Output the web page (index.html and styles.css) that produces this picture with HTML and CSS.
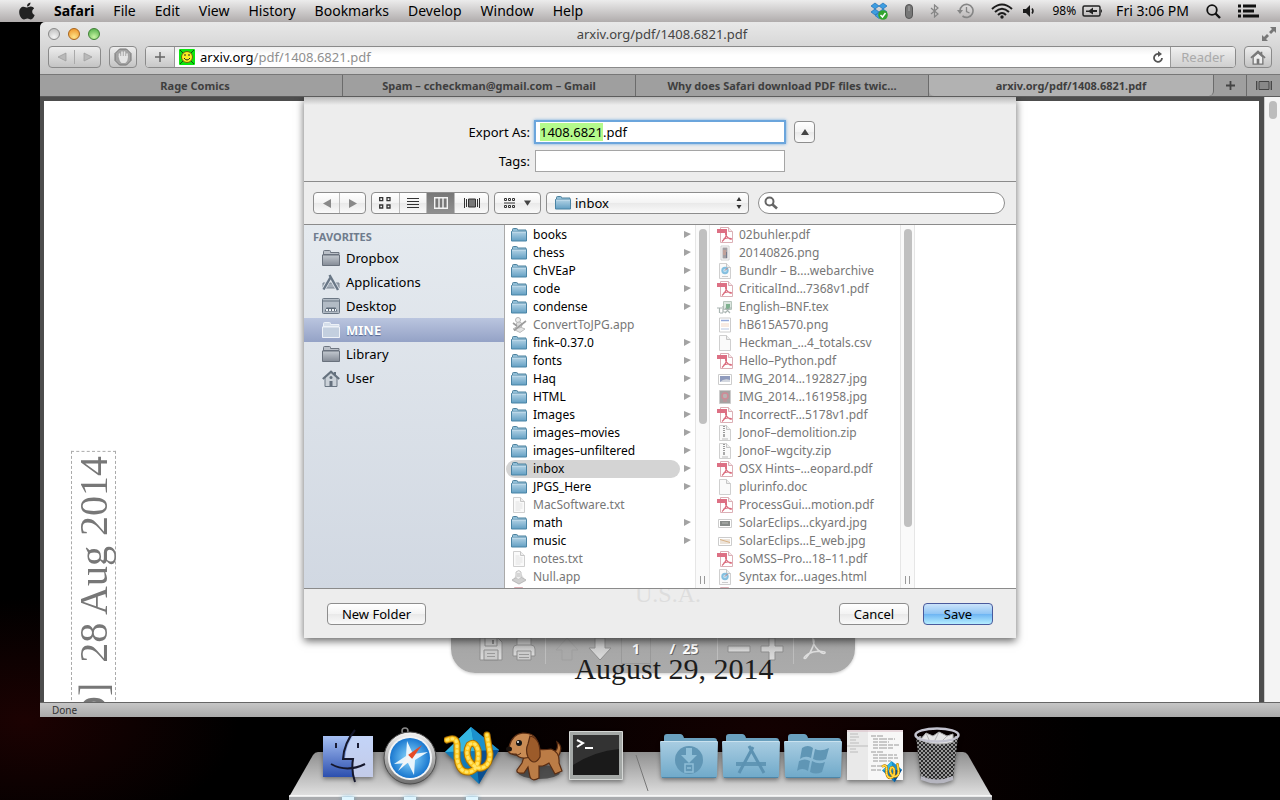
FILE: index.html
```html
<!DOCTYPE html>
<html lang="en">
<head>
<meta charset="utf-8">
<title>arxiv.org/pdf/1408.6821.pdf</title>
<link rel="stylesheet" href="styles.css">
</head>
<body>
<svg class="defs" width="0" height="0" aria-hidden="true">
  <defs>
    <linearGradient id="g-blue" x1="0" y1="0" x2="0" y2="1"><stop offset="0" stop-color="#b3d3e5"/><stop offset="1" stop-color="#629fc3"/></linearGradient>
    <linearGradient id="g-gray" x1="0" y1="0" x2="0" y2="1"><stop offset="0" stop-color="#c3c9d0"/><stop offset="1" stop-color="#848b96"/></linearGradient>
    <linearGradient id="g-big" x1="0" y1="0" x2="0" y2="1"><stop offset="0" stop-color="#a9cde2"/><stop offset="1" stop-color="#6fa9c9"/></linearGradient>
    <linearGradient id="g-metal" x1="0" y1="0" x2="0" y2="1"><stop offset="0" stop-color="#f4f4f4"/><stop offset="1" stop-color="#707070"/></linearGradient>
    <linearGradient id="g-key" x1="0" y1="0" x2="0" y2="1"><stop offset="0" stop-color="#bdbdbd"/><stop offset="1" stop-color="#dcdcdc"/></linearGradient>
    <symbol id="folder" viewBox="0 0 16 14">
      <path d="M1.500 3V1.500q0-1 1-1h3q1 0 1 1V2H15v2H1z" fill="#8fbdd6" stroke="#4c819d"/>
      <path d="M.5 3.500h15v9.500h-15z" fill="url(#g-blue)" stroke="#4a84a5"/>
      <path d="M1 4h14" stroke="#cbe2ef"/>
    </symbol>
    <symbol id="folder-gray" viewBox="0 0 18 16">
      <path d="M1.500 4V1.500q0-1 1-1h5q1 0 1 1V2.500H17v2H1z" fill="#bac0c8" stroke="#6d7580"/>
      <path d="M.5 5h17v10.500H.5z" fill="url(#g-gray)" stroke="#69717c"/>
    </symbol>
    <symbol id="folder-light" viewBox="0 0 18 16">
      <path d="M1.500 4V1.500q0-1 1-1h5q1 0 1 1V2.500H17v2H1z" fill="#d5deea" stroke="#edf1f7"/>
      <path d="M.5 5h17v10.500H.5z" fill="#c3cfdf" stroke="#eef2f8"/>
    </symbol>
    <symbol id="apps" viewBox="0 0 18 16">
      <path d="M1 8.500h16v5H1z" fill="#a3adb8" stroke="#7a8592"/>
      <path d="M1 15.500 9 2M7.500 1l8.500 14.500" stroke="#dfe5ec" stroke-width="4" fill="none"/>
      <path d="M1.500 15 9 2M7.500.5l8.500 15" stroke="#697786" stroke-width="2.400" fill="none"/>
    </symbol>
    <symbol id="desktop" viewBox="0 0 18 16">
      <rect x=".5" y=".5" width="17" height="15" rx="1" fill="#b2bbc5" stroke="#6a7683"/>
      <path d="M1 3h16" stroke="#6a7683"/><path d="M4.500 9.500h9l2 4h-13z" fill="#5e6b79"/>
      <path d="M4 12h10" stroke="#eef2f6" stroke-width="2" stroke-dasharray="2 1"/>
    </symbol>
    <symbol id="home" viewBox="0 0 18 17">
      <path d="M3 8v8.500h12V8L9 2.500z" fill="#cbd2d9" stroke="#6a7683"/>
      <path d="M.8 9 9 1.500 17.200 9M13 2v3" stroke="#65717e" stroke-width="2" fill="none"/>
      <path d="M7.500 11h3v5.500h-3z" fill="#65717e"/><circle cx="9" cy="7.500" r="1.500" fill="#65717e"/>
    </symbol>
    <symbol id="pdf" viewBox="0 0 16 16">
      <path d="M3.500.5h8l4 4v11h-12z" fill="#fff" stroke="#dbb0b6"/><path d="M11.500.5v4h4" fill="#f5e9eb" stroke="#dbb0b6"/>
      <path d="M0 2h10v4H0z" fill="#dd7084"/>
      <path d="M9 6c1.500 1-1 6-4 8.500M9 6c-1.500 1 1 5 5.500 6.500M6 12.500c2-1.500 6-2 9-.5" fill="none" stroke="#da6a7c" stroke-width="1.200"/>
    </symbol>
    <symbol id="file" viewBox="0 0 16 16">
      <path d="M2.500.5h7l4 4v11h-11z" fill="#fafafa" stroke="#cfcfcf"/><path d="M9.500.5v4h4" fill="#eee" stroke="#c6c6c6"/>
    </symbol>
    <symbol id="text" viewBox="0 0 16 16">
      <use href="#file"/><path d="M4.500 5h4M4.500 7h7M4.500 9h7M4.500 11h7M4.500 13h5" stroke="#e2e2e2"/>
    </symbol>
    <symbol id="zip" viewBox="0 0 16 16">
      <use href="#file"/><path d="M7 1v8" stroke="#999" stroke-width="2" stroke-dasharray="1 1"/><path d="M6 9h2v3H6z" fill="#aaa"/><path d="M5 14h6" stroke="#bbb"/>
    </symbol>
    <symbol id="web" viewBox="0 0 16 16">
      <use href="#file"/><circle cx="8" cy="7.500" r="3.700" fill="#85bfdf"/><circle cx="8" cy="7.500" r="1.800" fill="#b9dff2"/><path d="m8 7.500 2.500-2.500" stroke="#cf7f79"/><path d="M5 13.500h6" stroke="#ccc"/>
    </symbol>
    <symbol id="tex" viewBox="0 0 16 16">
      <path d="M6.500 2.500h8v8h-8z" fill="#dce7e0" stroke="#b9c7be"/><path d="M9 5h4v5H9z" fill="#7fb08f"/>
      <path d="M0 9h5M2.500 9v5M6 7v6h3M8 9l5 5M13 9l-5 5M12 9h3M3 14h3" stroke="#a9b4b1" fill="none" stroke-width="1.200"/>
    </symbol>
    <symbol id="tall" viewBox="0 0 16 16">
      <path d="M4 1h8v14H4z" fill="#fff" stroke="#cfcfcf"/><path d="M5.500 2.500h5v11h-5z" fill="#a3a0a3"/><path d="M6 5h3v5H6z" fill="#c0a199"/><path d="M9 7h1v6H9z" fill="#777c8c"/>
    </symbol>
    <symbol id="shot" viewBox="0 0 16 16">
      <path d="M2.500 1h11v14h-11z" fill="#fff" stroke="#ccc"/><path d="M4 3.500h8" stroke="#93a8da" stroke-width="1.500"/><path d="M4 7h8M4 9h8" stroke="#f0d6c5"/><path d="M4 12h8" stroke="#b8c7e2"/>
    </symbol>
    <symbol id="sky" viewBox="0 0 16 16">
      <path d="M1.500 3.500h13v10h-13z" fill="#fff" stroke="#ccc"/><path d="M3 5h10v6H3z" fill="#8f9bbd"/><path d="M3 11q4-4 10-2v2z" fill="#d3d7df"/>
    </symbol>
    <symbol id="ring" viewBox="0 0 16 16">
      <path d="M2.500 1.500h11v13h-11z" fill="#a5a2a2" stroke="#ccc"/><circle cx="8" cy="7" r="3" fill="#b8b2b2" stroke="#cf8a96" stroke-width="1.600"/><path d="M6 12h4" stroke="#cf8a96"/>
    </symbol>
    <symbol id="yard" viewBox="0 0 16 16">
      <path d="M1.500 4.500h13v8h-13z" fill="#fff" stroke="#ccc"/><path d="M3 6h10v5H3z" fill="#888c8a"/><path d="M5 8h6" stroke="#b6b8b4"/>
    </symbol>
    <symbol id="sun" viewBox="0 0 16 16">
      <path d="M1.500 4.500h13v8h-13z" fill="#fff" stroke="#ccc"/><path d="M3 6h10v5H3z" fill="#ece3d9"/><path d="m3 6.500 10 3" stroke="#d8b287"/>
    </symbol>
    <symbol id="robot" viewBox="0 0 16 16">
      <path d="m2 12 5-3 7 3-5 3.500z" fill="#e4e4e4" stroke="#bbb"/><circle cx="7" cy="3" r="2.500" fill="#eee" stroke="#b4b4b4"/><circle cx="8" cy="8" r="3" fill="#ddd" stroke="#bbb"/><path d="M3 13.500 15 4M2 6l4 3" stroke="#9c9c9c" stroke-width="1.600"/>
    </symbol>
    <symbol id="script" viewBox="0 0 16 16">
      <path d="m8 1 3 5 4 6-7 3.500L1 12l4-6z" fill="#e2e2e2"/><path d="m1 11 7-4 7 4-7 4z" fill="#d0d0d0" stroke="#bcbcbc"/><path d="M5 3q3-3 5 0v6q-3 3-5 0z" fill="#eee" stroke="#c4c4c4"/><path d="M6 5h3M6 7h3" stroke="#bbb"/>
    </symbol>
    <symbol id="rope" viewBox="0 0 56 60">
      <path d="m27 1 28 23-20 34L1 26z" fill="#117ab8"/><path d="m27 1 4 24-30 1z" fill="#35b7e2"/><path d="m27 1 28 23-24 1z" fill="#1b91ce"/><path d="m31 25 24-1-20 34z" fill="#0b4f91"/>
      <g fill="none" stroke-linecap="round"><path d="M3 14q9-4 10 4v14q2 15 12 14 11-2 9-22-3-10-9-5-4 7 0 15 7 11 15 7 6-3 6-13L43 9" stroke="#a96f04" stroke-width="7"/>
      <path d="M3 14q9-4 10 4v14q2 15 12 14 11-2 9-22-3-10-9-5-4 7 0 15 7 11 15 7 6-3 6-13L43 9" stroke="#fec61c" stroke-width="5"/>
      <path d="M3 14q9-4 10 4v14q2 15 12 14 11-2 9-22-3-10-9-5-4 7 0 15 7 11 15 7 6-3 6-13L43 9" stroke="#ffe56a" stroke-width="3" stroke-dasharray="1 4"/></g>
    </symbol>
    <symbol id="bigfolder" viewBox="0 0 60 46">
      <path d="M5 10V4q0-3 3-3h13q3 0 4 4h30q3 0 3 3v8H5z" fill="#6aa0be"/>
      <path d="M2 8h56q1 0 1 1l-1 34q0 2-2 2H4q-2 0-2-2L1 9q0-1 1-1z" fill="url(#g-big)"/><path d="M2 8.500h56" stroke="#c9e2ef"/><path d="M3 44.500h54" stroke="#4d86a8"/>
    </symbol>
  </defs>
</svg>

<header class="menubar">
  <nav class="menus" aria-label="Application menu">
    <button class="apple" aria-label="Apple"><svg width="16" height="18" viewBox="0 0 16 18"><path d="M11.500.5c.2 2-1.500 4-3.500 4C7.800 2.500 9.500.8 11.500.5zM8.200 5.600c.8 0 2-1 3.600-1 1.400 0 2.600.8 3.300 1.800-2.800 1.700-2.300 5.500.6 6.600-.7 2-2.200 4.400-3.900 4.400-1.300 0-1.800-.8-3.400-.8s-2.200.8-3.400.8C2.500 17.400.2 13.600.2 10.200c0-3.400 2.100-5.400 4.400-5.400 1.500 0 2.600.8 3.600.8z" fill="#222"/></svg></button>
    <button class="app-name">Safari</button><button>File</button><button>Edit</button><button>View</button><button>History</button><button>Bookmarks</button><button>Develop</button><button>Window</button><button>Help</button>
  </nav>
  <div class="extras">
    <svg width="18" height="18" viewBox="0 0 18 18"><path d="m5 1 4 3-4 3-4-3zM13 1l4 3-4 3-4-3zM5 7l4 3-4 3-4-3zM13 7l4 3-4 3-4-3zM5 13.500l4-3 4 3-4 3z" fill="#3d9de0" stroke="#1c70b7" stroke-width=".7"/><circle cx="13" cy="13" r="4.800" fill="#31a52e"/><path d="m10.500 13 2 2 3-4" fill="none" stroke="#fff" stroke-width="1.500"/></svg>
    <svg width="8" height="15" viewBox="0 0 8 15"><rect x=".5" y=".5" width="7" height="14" rx="3.500" fill="#777" stroke="#555"/><path d="M4 2v5" stroke="#aaa"/></svg>
    <svg width="10" height="14" viewBox="0 0 10 14"><path d="m1 4 7 6-3.500 3V1L8 4l-7 6" fill="none" stroke="#858585" stroke-width="1.200"/></svg>
    <svg width="17" height="16" viewBox="0 0 17 16"><path d="M3 8a6.500 6.500 0 1 1 2.500 5" fill="none" stroke="#858585" stroke-width="1.600"/><path d="M0 7h6L3 11z" fill="#858585"/><path d="M9.500 4v4.500l3 1.500" fill="none" stroke="#858585" stroke-width="1.300"/></svg>
    <svg width="22" height="16" viewBox="0 0 22 16"><path d="M1 6q10-9 20 0M4 9q7-6.500 14 0M7 12q4-4 8 0" fill="none" stroke="#1c1c1c" stroke-width="2"/><circle cx="11" cy="14" r="1.700" fill="#1c1c1c"/></svg>
    <svg class="speaker" width="12" height="12" viewBox="0 0 12 12"><path d="M0 4h3l4-4v12L3 8H0z" fill="#1c1c1c"/><path d="M9 3.500q2 2.500 0 5" fill="none" stroke="#1c1c1c" stroke-width="1.500"/></svg>
    <span class="battery"><span>98%</span><svg width="21" height="12" viewBox="0 0 21 12"><rect x="1" y="1" width="17" height="10" rx="1.500" fill="none" stroke="#222" stroke-width="1.500"/><path d="M19 4q2 2 0 4z" fill="#222"/><path d="M4 5.500h3L11 2.500V5h4v2h-4v2.500L7 7H4z" fill="#222"/></svg></span>
    <span class="clock">Fri 3:06 PM</span>
    <svg width="15" height="15" viewBox="0 0 15 15"><circle cx="6" cy="6" r="4.800" fill="none" stroke="#111" stroke-width="1.800"/><path d="m9.500 9.500 4.500 4.500" stroke="#111" stroke-width="2.400"/></svg>
    <svg width="22" height="14" viewBox="0 0 22 14"><path d="M0 2h3M5 2h13M0 7h3M5 7h11M0 12h3M5 12h16" stroke="#111" stroke-width="3"/></svg>
  </div>
</header>

<main class="window">
  <div class="titlebar">
    <div class="lights"><button class="light gray" aria-label="Close"></button><button class="light amber" aria-label="Minimize"></button><button class="light green" aria-label="Zoom"></button></div>
    <h1>arxiv.org/pdf/1408.6821.pdf</h1>
    <svg class="full" width="14" height="14" viewBox="0 0 14 14"><path d="M8 0h6v6l-2-2-3 3-2-2 3-3zM6 14H0V8l2 2 3-3 2 2-3 3z" fill="#777"/></svg>
  </div>
  <div class="toolbar">
    <div class="group pair"><button aria-label="Back"><svg width="10" height="10" viewBox="0 0 10 10"><path d="M9 1v8L1 5z" fill="#b9b9b9" stroke="#999" stroke-width=".7"/></svg></button><button aria-label="Forward"><svg width="10" height="10" viewBox="0 0 10 10"><path d="M1 1v8l8-4z" fill="#b9b9b9" stroke="#999" stroke-width=".7"/></svg></button></div>
    <button class="chip" aria-label="Block"><svg width="18" height="18" viewBox="0 0 18 18"><path d="M5.500 1h7L17 5.500v7L12.500 17h-7L1 12.500v-7z" fill="#a3a3a3" stroke="#777"/><path d="M5.500 9V6M8 8V4m2.500 4V4M13 9V6" stroke="#e4e4e4" stroke-width="1.600" stroke-linecap="round"/><path d="M4.800 8h9q.5 5-2.500 7H7.500Q5 13 4.800 8z" fill="#e4e4e4"/></svg></button>
    <div class="address">
      <button class="plus" aria-label="Add bookmark"><svg width="12" height="12" viewBox="0 0 12 12"><path d="M6 1v10M1 6h10" stroke="#666" stroke-width="1.500"/></svg></button>
      <svg class="fav" width="16" height="16" viewBox="0 0 16 16"><rect width="16" height="16" rx="1" fill="#0be60e"/><path d="m1 1 14 14M15 1 1 15" stroke="#174d12"/><circle cx="8" cy="8" r="5.500" fill="#fbee22" stroke="#6a6410"/><path d="M6 5v2M10 5v2M5 9q3 4 6 0" fill="none" stroke="#222"/></svg>
      <a class="url" href="#pdf-page">arxiv.org<span>/pdf/1408.6821.pdf</span></a>
      <button class="reload" aria-label="Reload"><svg width="12" height="13" viewBox="0 0 12 13"><path d="M7 3a4 4 0 1 0 3 4" fill="none" stroke="#555" stroke-width="1.800"/><path d="m6 0 4 3-4 3z" fill="#555"/></svg></button>
      <button class="reader">Reader</button>
    </div>
    <button class="chip" aria-label="Home"><svg width="16" height="15" viewBox="0 0 18 17"><path d="M3.500 8v8h11V8L9 3z" fill="#eee" stroke="#777" stroke-width="1.500"/><path d="M1 9 9 1.500 17 9M13 2v3" stroke="#777" stroke-width="1.800" fill="none"/><path d="M7.500 10h3v6h-3z" fill="#777"/></svg></button>
  </div>
  <div class="tabs">
    <button class="tab">Rage Comics</button><button class="tab">Spam – ccheckman@gmail.com – Gmail</button><button class="tab">Why does Safari download PDF files twic…</button><button class="tab current">arxiv.org/pdf/1408.6821.pdf</button>
    <button class="tab small" aria-label="New tab"><svg width="9" height="9" viewBox="0 0 9 9"><path d="M4.500 0v9M0 4.500h9" stroke="#444" stroke-width="1.800"/></svg></button><button class="tab small" aria-label="Show all tabs"><svg width="16" height="9" viewBox="0 0 16 9"><path d="M.7 0v9M15.300 0v9" stroke="#444" stroke-width="1.300"/><path d="M3 .5h10v8H3z" fill="#888" stroke="#444"/></svg></button>
  </div>

  <div class="viewport">
    <article class="page" id="pdf-page">
      <p class="stamp">[math.CO] &nbsp;28 Aug 2014</p>
      <p class="date">August 29, 2014</p>
    </article>
    <div class="scroll"><span></span></div>

    <div class="hud">
      <svg width="24" height="24" viewBox="0 0 24 24"><path d="M1 1h18l4 4v18H1z" fill="url(#g-key)" stroke="#8d8d8d"/><path d="M6 1h12v8H6z" fill="#c9c9c9" stroke="#8d8d8d"/><path d="M14 3v4" stroke="#888" stroke-width="2"/><path d="M5 13h14v10H5z" fill="#cacaca" stroke="#8d8d8d"/><path d="M8 16.500h8M8 19.500h8" stroke="#999"/></svg>
      <svg width="24" height="24" viewBox="0 0 24 24"><path d="M5 1h14v8H5z" fill="#c6c6c6" stroke="#8d8d8d"/><path d="M1 12q0-4 4-4h14q4 0 4 4v7H1z" fill="url(#g-key)" stroke="#8d8d8d"/><path d="M5 14h14v9H5z" fill="#cdcdcd" stroke="#8d8d8d"/><path d="M7 17.500h10M7 20.500h10" stroke="#999"/></svg>
      <i></i>
      <svg class="dim" width="24" height="24" viewBox="0 0 24 24"><path d="m12 1 11 12h-6v10H7V13H1z" fill="#aaa" stroke="#999"/></svg>
      <svg width="24" height="24" viewBox="0 0 24 24"><path d="M7 1h10v10h6L12 23 1 11h6z" fill="url(#g-key)" stroke="#8d8d8d"/></svg>
      <span class="num">1</span><span class="of">/&nbsp; 25</span>
      <i></i>
      <svg width="24" height="24" viewBox="0 0 24 24"><path d="M1 9h22v6H1z" fill="url(#g-key)" stroke="#8d8d8d"/></svg>
      <svg width="24" height="24" viewBox="0 0 24 24"><path d="M9 1h6v8h8v6h-8v8H9v-8H1V9h8z" fill="url(#g-key)" stroke="#8d8d8d"/></svg>
      <i></i>
      <svg width="24" height="24" viewBox="0 0 24 24"><path d="M10 2c3 1-1 13-7 19-4 2-2-3 7-6 6-1 13-1 12 1-2 2-12-5-12-14z" fill="none" stroke="#dedede" stroke-width="1.500"/></svg>
    </div>

    <form class="sheet">
      <div class="fields">
        <label for="name">Export As:</label>
        <input id="name" type="text" value="1408.6821.pdf" autofocus spellcheck="false">
        <button type="button" class="btn square" aria-label="Collapse"><svg width="8" height="6" viewBox="0 0 8 6"><path d="M0 6h8L4 0z" fill="#444"/></svg></button>
        <label for="tags">Tags:</label>
        <input id="tags" type="text">
      </div>
      <div class="tools">
        <div class="btn seg nav"><button type="button" aria-label="Back"><svg width="10" height="9" viewBox="0 0 10 9"><path d="M9 0v9L1 4.500z" fill="#888"/></svg></button><button type="button" aria-label="Forward"><svg width="10" height="9" viewBox="0 0 10 9"><path d="M1 0v9l8-4.500z" fill="#888"/></svg></button></div>
        <div class="btn seg views">
          <button type="button" aria-label="Icons"><svg width="12" height="12" viewBox="0 0 12 12"><path d="M.7.7h3v3h-3zM8 .7h3v3H8zM.7 8h3v3h-3zM8 8h3v3H8z" fill="none" stroke="#333" stroke-width="1.300"/></svg></button>
          <button type="button" aria-label="List"><svg width="12" height="12" viewBox="0 0 12 12"><path d="M0 1.500h12M0 4.500h12M0 7.500h12M0 10.500h12" stroke="#333"/></svg></button>
          <button type="button" class="on" aria-label="Columns"><svg width="14" height="12" viewBox="0 0 14 12"><path d="M.7.7h12.600v10.600H.7zM5 1v10M9 1v10" fill="#777" stroke="#f4f4f4" stroke-width="1.400"/></svg></button>
          <button type="button" class="flow" aria-label="Cover Flow"><svg width="16" height="10" viewBox="0 0 16 10"><path d="M.5 0v10M2.500 1v8M13.500 1v8M15.500 0v10" stroke="#333"/><path d="M4.500 1h7v8h-7z" fill="#777" stroke="#333"/></svg></button>
        </div>
        <button type="button" class="btn arrange" aria-label="Arrange"><svg width="12" height="12" viewBox="0 0 12 12"><path d="M.5 1.500h2v2h-2zM4.500 1.500h2v2h-2zM8.500 1.500h2v2h-2zM.5 8.500h2v2h-2zM4.500 8.500h2v2h-2zM8.500 8.500h2v2h-2zM0 6h11" fill="none" stroke="#333"/></svg><svg width="7" height="6" viewBox="0 0 8 6"><path d="M0 0h8L4 6z" fill="#444"/></svg></button>
        <div class="place"><svg class="place-icon" width="16" height="14"><use href="#folder"/></svg><select class="btn" aria-label="Folder"><option>inbox</option></select><svg class="place-arrows" width="6" height="12" viewBox="0 0 6 12"><path d="M.5 4h5L3 0zM.5 8h5L3 12z" fill="#333"/></svg></div>
        <label class="find"><svg width="14" height="14" viewBox="0 0 14 14"><circle cx="5.500" cy="5.500" r="4" fill="none" stroke="#666" stroke-width="2"/><path d="m8.500 8.500 4.500 4" stroke="#666" stroke-width="2.600"/></svg><input type="search" aria-label="Search"></label>
      </div>
      <div class="finder">
        <nav class="side" aria-label="Favorites">
          <h2>FAVORITES</h2>
          <a href="#dropbox"><svg width="18" height="16"><use href="#folder-gray"/></svg>Dropbox</a>
          <a href="#applications"><svg width="18" height="17"><use href="#apps"/></svg>Applications</a>
          <a href="#desktop-folder"><svg width="18" height="16"><use href="#desktop"/></svg>Desktop</a>
          <a href="#mine" class="sel"><svg width="18" height="16"><use href="#folder-light"/></svg>MINE</a>
          <a href="#library"><svg width="18" height="16"><use href="#folder-gray"/></svg>Library</a>
          <a href="#user"><svg width="18" height="17"><use href="#home"/></svg>User</a>
        </nav>
        <ul class="files">
          <li class="dir"><svg><use href="#folder"/></svg>books</li>
          <li class="dir"><svg><use href="#folder"/></svg>chess</li>
          <li class="dir"><svg><use href="#folder"/></svg>ChVEaP</li>
          <li class="dir"><svg><use href="#folder"/></svg>code</li>
          <li class="dir"><svg><use href="#folder"/></svg>condense</li>
          <li><svg><use href="#robot"/></svg>ConvertToJPG.app</li>
          <li class="dir"><svg><use href="#folder"/></svg>fink–0.37.0</li>
          <li class="dir"><svg><use href="#folder"/></svg>fonts</li>
          <li class="dir"><svg><use href="#folder"/></svg>Haq</li>
          <li class="dir"><svg><use href="#folder"/></svg>HTML</li>
          <li class="dir"><svg><use href="#folder"/></svg>Images</li>
          <li class="dir"><svg><use href="#folder"/></svg>images–movies</li>
          <li class="dir"><svg><use href="#folder"/></svg>images–unfiltered</li>
          <li class="dir open"><svg><use href="#folder"/></svg>inbox</li>
          <li class="dir"><svg><use href="#folder"/></svg>JPGS_Here</li>
          <li><svg><use href="#text"/></svg>MacSoftware.txt</li>
          <li class="dir"><svg><use href="#folder"/></svg>math</li>
          <li class="dir"><svg><use href="#folder"/></svg>music</li>
          <li><svg><use href="#text"/></svg>notes.txt</li>
          <li><svg><use href="#script"/></svg>Null.app</li>
          <li><svg><use href="#pdf"/></svg></li>
        </ul>
        <div class="track"><span class="short"></span><b></b></div>
        <ul class="files">
          <li><svg><use href="#pdf"/></svg>02buhler.pdf</li>
          <li><svg><use href="#tall"/></svg>20140826.png</li>
          <li><svg><use href="#web"/></svg>Bundlr – B....webarchive</li>
          <li><svg><use href="#pdf"/></svg>CriticalInd…7368v1.pdf</li>
          <li><svg><use href="#tex"/></svg>English–BNF.tex</li>
          <li><svg><use href="#shot"/></svg>hB615A570.png</li>
          <li><svg><use href="#file"/></svg>Heckman_…4_totals.csv</li>
          <li><svg><use href="#pdf"/></svg>Hello–Python.pdf</li>
          <li><svg><use href="#sky"/></svg>IMG_2014…192827.jpg</li>
          <li><svg><use href="#ring"/></svg>IMG_2014…161958.jpg</li>
          <li><svg><use href="#pdf"/></svg>IncorrectF…5178v1.pdf</li>
          <li><svg><use href="#zip"/></svg>JonoF–demolition.zip</li>
          <li><svg><use href="#zip"/></svg>JonoF–wgcity.zip</li>
          <li><svg><use href="#pdf"/></svg>OSX Hints–…eopard.pdf</li>
          <li><svg><use href="#file"/></svg>plurinfo.doc</li>
          <li><svg><use href="#pdf"/></svg>ProcessGui…motion.pdf</li>
          <li><svg><use href="#yard"/></svg>SolarEclips…ckyard.jpg</li>
          <li><svg><use href="#sun"/></svg>SolarEclips…E_web.jpg</li>
          <li><svg><use href="#pdf"/></svg>SoMSS–Pro…18–11.pdf</li>
          <li><svg><use href="#web"/></svg>Syntax for…uages.html</li>
          <li><svg><use href="#pdf"/></svg></li>
        </ul>
        <div class="track"><span class="long"></span><b></b></div>
      </div>
      <div class="actions">
        <span class="ghost">U.S.A.</span>
        <button type="button" class="btn wide">New Folder</button>
        <button type="button" class="btn push">Cancel</button>
        <button type="submit" class="btn save">Save</button>
      </div>
    </form>
  </div>
  <footer class="status">Done</footer>
</main>

<nav class="dock" aria-label="Dock">
  <svg class="shelf" viewBox="0 0 703 48" preserveAspectRatio="none"><defs><linearGradient id="g-shelf" x1="0" y1="0" x2="0" y2="1"><stop offset="0" stop-color="#8f8f8f"/><stop offset="1" stop-color="#e3e3e3"/></linearGradient></defs><path d="M29 0h645q3 0 5 3l24 42H0L24 3q2-3 5-3z" fill="url(#g-shelf)"/><path d="M0 44h703v4H0z" fill="#a9abae"/><path d="M0 44h703" stroke="#fff" stroke-width="1.500"/></svg>
  <ul class="items">
    <li class="running"><svg width="50" height="54" viewBox="0 0 50 54"><defs><linearGradient id="g-find" x1="0" y1="0" x2="0" y2="1"><stop offset="0" stop-color="#a6c0f3"/><stop offset="1" stop-color="#2c4fae"/></linearGradient><linearGradient id="g-find2" x1="0" y1="0" x2="0" y2="1"><stop offset="0" stop-color="#c3d4f8"/><stop offset="1" stop-color="#c3cbe8"/></linearGradient></defs><path d="M0 7h50v41H0z" fill="url(#g-find2)"/><path d="M0 7h30q-7 10-8 22h8q-1 9 1 19H0z" fill="url(#g-find)"/><path d="M32 1q-11 13-12 29h10q-2 12 2 23" fill="none" stroke="#15172c" stroke-width="2"/><path d="M13 14v5M35 14v5" stroke="#1a1d36" stroke-width="2"/><path d="M8 35q16 9 34 0" fill="none" stroke="#15172c" stroke-width="2"/></svg></li>
    <li class="running"><svg width="54" height="58" viewBox="0 0 54 58"><defs><radialGradient id="g-sea"><stop offset="0" stop-color="#8fdcff"/><stop offset="1" stop-color="#1977cf"/></radialGradient></defs><circle cx="22" cy="4" r="3" fill="none" stroke="#888" stroke-width="1.500"/><circle cx="27" cy="31" r="26" fill="url(#g-metal)" stroke="#4d4d4d"/><circle cx="27" cy="31" r="22" fill="#f2f4f6"/><circle cx="27" cy="31" r="20" fill="url(#g-sea)"/><path d="m24 14 6 13 15-2-13 8-1 15-6-12-14 1 12-8z" fill="#e8f5fc"/><path d="M39 18 29 32l-4-4z" fill="#e54b24"/><path d="m15 44 10-16 4 4z" fill="#f4f6f7"/></svg></li>
    <li class="running"><svg width="56" height="60"><use href="#rope"/></svg></li>
    <li><svg width="58" height="54" viewBox="0 0 58 54"><ellipse cx="34" cy="43" rx="21" ry="7" fill="#333" opacity=".7"/><g stroke="#5a2d13" stroke-width="1.200"><path d="M49 23q5-3 3-10 7 5 1 15z" fill="#b97a43"/><path d="M22 18q12 4 24 2 9 3 8 14l3 8-7 3-6-11q-6 4-10 3v12q-7 4-9-1l-2-10-4 6q-8 1-7-3l5-7z" fill="#bb7c46"/><path d="M4 18Q7 5 18 4q13 0 15 11l-4 12q-14 5-18-2Q1 26 4 18z" fill="#c98b54"/><path d="M25 7q11 2 10 21-6 10-12 0-3-7 0-13z" fill="#9c5b2a"/></g><circle cx="14" cy="14" r="3" fill="#161616"/><circle cx="13" cy="13" r="1" fill="#fff"/><ellipse cx="4" cy="20" rx="3" ry="2.500" fill="#19120e"/><path d="M7 25q5 3 9-1" fill="none" stroke="#4f2912"/></svg></li>
    <li><svg width="54" height="50" viewBox="0 0 54 50"><path d="M.5.5h53v48H.5z" fill="#a4a8a6" stroke="#d5d8d6"/><path d="M4 4h46v40H4z" fill="#1a1a1a"/><path d="M4 34Q26 20 50 18V4H4z" fill="#333"/><path d="m8 9 6 3-6 4M16 17h8" fill="none" stroke="#fff" stroke-width="2"/></svg></li>
    <li class="gap"><svg width="14" height="38" viewBox="0 0 14 38"><path d="m1 1 12 36" stroke="#777"/></svg></li>
    <li><svg width="60" height="46"><use href="#bigfolder"/><circle cx="30" cy="27" r="14" fill="#6096b5"/><path d="M27 15h6v7h5l-8 8-8-8h5z" fill="#8fbfd8"/><path d="M26 31h8v8h-8zM28 35h4" fill="none" stroke="#8fbfd8" stroke-width="1.500"/></svg></li>
    <li><svg width="60" height="46"><use href="#bigfolder"/><path d="M15 29h30v4H15z" fill="#6096b5"/><path d="m18 40 14-26M28 13l15 27" stroke="#5c92b2" stroke-width="3"/></svg></li>
    <li><svg width="60" height="46"><use href="#bigfolder"/><path d="M19 15q6-4 11 0l-2 10q-6-3-11 1zM32 16q6 3 14-1l-3 11q-6 3-13 0zM16 28q6-3 11 0l-2 10q-6-4-11 0zM29 28q7 4 13 1l-3 10q-6 3-12 0z" fill="#6096b5"/></svg></li>
    <li><svg width="58" height="54" viewBox="0 0 58 54"><path d="M1 1h56v50H1z" fill="#f7f7f7"/><path d="M1 1h21v50H1z" fill="#e9e9e9"/><path d="M1 2h56" stroke="#d9b9c3"/><path d="M4 5h8M4 8h9M4 11h6M4 14h9M4 20h6M4 23h8M1 17h21" stroke="#bbb"/><path d="M25 7h12M27 10h22M27 13h16M27 16h26M27 19h20M25 23h12M27 26h24M27 29h25M27 32h18M25 37h12M25 41h10" stroke="#999" stroke-dasharray="5 1 8 1"/><svg x="35" y="32" width="22" height="22"><use href="#rope"/></svg></svg></li>
    <li><svg width="46" height="58" viewBox="0 0 46 58"><defs><pattern id="mesh" width="4" height="4" patternUnits="userSpaceOnUse"><path d="m0 0 4 4M4 0 0 4" stroke="#b4b4b4" stroke-width=".8"/></pattern></defs><path d="M2 9h42l-5 43q-16 7-32 0z" fill="#2b2b2b"/><path d="M2 9h42l-5 43q-16 7-32 0z" fill="url(#mesh)"/><path d="m6 13 6-7 7 3 6-4 8 4 6-2v8q-16 5-33-2z" fill="#e6e6e6" stroke="#aaa"/><path d="m12 6 4 9M25 5l-5 10M33 9l-6 6" stroke="#b5b5b5"/><ellipse cx="23" cy="8" rx="21.500" ry="6.500" fill="none" stroke="#c3c3cf" stroke-width="2.500"/><path d="M7 49q16 7 32 0v4q-16 7-32 0z" fill="#b5b5bf"/></svg></li>
  </ul>
</nav>
<script src="select.js"></script>
</body>
</html>
```
FILE: styles.css
```css
* { box-sizing: border-box; }
html, body { height: 100%; }
body {
  margin: 0; display: flex; flex-direction: column; overflow: hidden;
  background: radial-gradient(ellipse at 2% 90%, #1c0202 0, transparent 12%), radial-gradient(ellipse at 60% 94%, #140101 0, transparent 30%), #000;
  font: 13px/18px "Noto Sans", "Open Sans", sans-serif; color: #000;
}
button, input, select { font: inherit; color: inherit; margin: 0; }
button { padding: 0; border: 0; background: none; display: flex; align-items: center; justify-content: center; }
svg { flex: none; display: block; }
ul { list-style: none; margin: 0; padding: 0; }
p, h1, h2 { margin: 0; font-weight: 400; }
.defs { position: absolute; }

.menubar { flex: none; height: 22px; display: flex; justify-content: space-between; padding: 0 20px 0 19px; background: linear-gradient(#ececec, #b0acac); font-size: 14px; }
.menus, .extras { display: flex; align-items: center; }
.menus { gap: 19px; }
.app-name { font-weight: 700; }
.extras { gap: 17px; }
.extras .speaker { margin: 0 0 0 -7px; }
.battery { display: flex; align-items: center; gap: 6px; font-size: 12px; margin-right: -4px; }

.window { flex: 1; min-height: 0; margin-left: 40px; display: flex; flex-direction: column; border-radius: 5px 0 0 0; overflow: hidden; background: linear-gradient(#e8e8e8, #b4b4b4 74px, #b4b4b4); }
.titlebar { flex: none; height: 24px; display: grid; grid-template-columns: 80px 1fr 80px; align-items: center; padding: 0 4px 0 8px; }
.lights { display: flex; gap: 8px; }
.light { width: 12px; height: 12px; border-radius: 50%; border: 1px solid #888; background: radial-gradient(circle at 50% 80%, #f4f4f4, #b9b9b9); }
.light.amber { border-color: #a8631a; background: radial-gradient(circle at 50% 80%, #ffe489, #ec8e21); }
.light.green { border-color: #3f8034; background: radial-gradient(circle at 50% 80%, #c8f5a4, #4aa943); }
.titlebar h1 { text-align: center; color: #444; font-size: 13px; }
.full { justify-self: end; }
.toolbar { flex: none; height: 28px; display: flex; align-items: flex-start; gap: 8px; padding: 0 8px; }
.group, .chip, .address { height: 22px; border: 1px solid #8a8a8a; border-radius: 4px; background: linear-gradient(#ededed, #c4c4c4); }
.group { width: 53px; display: flex; }
.group button { flex: 1; margin: 3px 0; }
.group button + button { border-left: 1px solid #aaa; }
.chip { width: 28px; }
.address { flex: 1; display: flex; align-items: center; background: linear-gradient(#f0f0f0, #fff 8px); overflow: hidden; }
.plus { width: 29px; align-self: stretch; border-right: 1px solid #999; background: linear-gradient(#ededed, #c8c8c8); }
.fav { margin: 0 5px 0 4px; }
.url { flex: 1; color: #000; text-decoration: none; }
.url span { color: #8e8e8e; }
.reload { width: 24px; }
.reader { width: 65px; align-self: stretch; border-left: 1px solid #999; color: #aaa; background: linear-gradient(#f0f0f0, #cfcfcf); }
.tabs { flex: none; height: 23px; display: flex; background: #9f9f9f; border-top: 1px solid #777; border-bottom: 1px solid #5c5c5c; }
.tab { flex: 1 1 293px; min-width: 0; padding: 0 8px; white-space: nowrap; font-size: 11px; font-weight: 700; color: #3e3e3e; border-right: 1px solid #6b6b6b; border-radius: 0 0 0 5px; }
.tab:first-child { flex-basis: 303px; padding-left: 16px; }
.tab.current { flex-basis: 285px; background: #b2b2b2; border-radius: 0 0 5px 5px; }
.tab.small { flex: 0 0 33px; }
.tab.small:last-child { border-right: 0; }

.viewport { flex: 1; min-height: 0; position: relative; display: flex; background: #4d4d4d; padding: 4px 0 0 4px; overflow: hidden; }
.page { flex: 1; position: relative; background: #fff; margin-right: 5px; overflow: hidden; }
.stamp { position: absolute; left: 27px; top: 350px; width: 45px; padding-bottom: 4px; border: 1px dashed #aaa; writing-mode: vertical-rl; transform: rotate(180deg); font: 40px/43px "Liberation Serif", serif; color: #777; white-space: nowrap; }
.date { position: absolute; z-index: 1; left: 0; right: 0; bottom: 16px; padding-left: 45px; text-align: center; font: 30px/34px "Liberation Serif", serif; color: #1c1c1c; }
.scroll { width: 16px; margin-top: -4px; padding: 4px; background: #f4f4f4; border-left: 1px solid #ccc; }
.scroll span { display: block; width: 8px; height: 18px; border-radius: 4px; background: #bcbcbc; }
.hud { position: absolute; z-index: 0; left: 0; right: 14px; bottom: 29px; margin: 0 auto; width: 404px; height: 58px; padding: 10px 28px 0; display: flex; align-items: center; gap: 9px; border-radius: 24px; background: linear-gradient(#a2a2a2, #ababab); color: #fff; font-weight: 700; font-size: 14px; text-shadow: 1px 1px 0 #666; box-shadow: 0 1px 3px #ccc; }
.hud i { width: 1px; height: 30px; background: #bdbdbd; }
.hud .dim { opacity: .6; }
.hud .num { width: 30px; text-align: center; border: 1px solid #999; line-height: 28px; }
.hud .of { width: 48px; text-align: center; }
.status { flex: none; height: 15px; padding-left: 12px; font-size: 10px; line-height: 14px; color: #333; background: linear-gradient(#c6c6c6, #a9a9a9); border-top: 1px solid #666; }

.sheet { position: absolute; z-index: 2; top: 0; left: 0; right: 0; margin: 0 auto; width: 712px; display: flex; flex-direction: column; background: #ededed; box-shadow: 0 3px 8px rgba(0,0,0,.6); }
.fields { display: grid; grid-template-columns: 226px 250px 21px; column-gap: 5px; row-gap: 7px; align-items: center; padding: 24px 0 9px; border-bottom: 1px solid #8b8b8b; background: linear-gradient(#b9b9b9, #ededed 8px); }
.fields label { text-align: right; }
.fields input { height: 22px; padding: 0 4px; border: 1px solid #a5a5a5; background: #fff; outline: 0; border-radius: 0; }
.fields input:focus { box-shadow: 0 0 0 1px #6ba5dc, 0 0 3px 1px #6ba5dc; border-color: #6ba5dc; }
.fields input::selection { background: #b4fa8c; color: #000; }
.fields .square { margin-left: 4px; }
.btn { height: 22px; border: 1px solid #8d8d8d; border-radius: 4px; background: linear-gradient(#fff, #f3f3f3 50%, #e9e9e9 51%, #fafafa); }
.square { width: 21px; }
.tools { display: flex; gap: 5px; padding: 10px 11px 10px 9px; border-bottom: 1px solid #8b8b8b; }
.seg { display: flex; overflow: hidden; }
.seg button { flex: 1; }
.seg button + button { border-left: 1px solid #bbb; }
.nav { width: 53px; }
.views { width: 118px; }
.seg .flow { flex: 0 0 34px; }
.seg .on { background: linear-gradient(#777, #8f8f8f); }
.arrange { width: 47px; gap: 8px; }
.place { position: relative; width: 203px; margin-right: 4px; }
.place select { display: block; width: 100%; appearance: none; padding: 0 20px 0 28px; line-height: 18px; }
.place-icon { position: absolute; left: 9px; top: 4px; }
.place-arrows { position: absolute; right: 7px; top: 5px; }
.find { flex: 1; height: 22px; display: flex; align-items: center; padding: 0 5px; border: 1px solid #8d8d8d; border-radius: 11px; background: #fff; }
.find input { flex: 1; min-width: 0; border: 0; outline: 0; background: none; }

.finder { display: flex; height: 364px; background: #fff; border-bottom: 1px solid #8b8b8b; overflow: hidden; }
.side { flex: 0 0 201px; border-right: 1px solid #aaa; background: linear-gradient(#e5eaef, #d1d8e2); }
.side h2 { padding: 3px 9px 0; font-size: 11px; font-weight: 700; color: #6f7c8d; }
.side a { display: flex; align-items: center; gap: 6px; height: 24px; padding-left: 18px; color: #000; text-decoration: none; }
.side .sel { color: #fff; font-weight: 700; background: linear-gradient(#bac5df, #94a2c6); text-shadow: 0 1px 1px #536590; }
.files { flex: 0 0 190px; padding-top: 1px; overflow: hidden; }
.files li { display: flex; align-items: center; gap: 6px; height: 18px; padding-left: 5px; margin: 0 15px 0 1px; color: #777; font-size: 12px; white-space: nowrap; position: relative; }
.files + .track + .files li { padding-left: 6px; }
.files li svg { width: 16px; height: 16px; }
.files .dir { color: #000; }
.files .dir::after { content: ""; position: absolute; right: -11px; top: 5px; border-left: 7px solid #a3a3a3; border-top: 3px solid transparent; border-bottom: 4px solid transparent; }
.files .open { background: #d4d4d4; border-radius: 9px; }
.track { flex: 0 0 15px; display: flex; flex-direction: column; align-items: center; justify-content: space-between; padding: 4px 0; border: 1px solid #e6e6e6; border-width: 0 1px; background: #fafafa; }
.track span { width: 8px; border-radius: 4px; background: #c0c0c0; }
.short { height: 195px; }
.long { height: 298px; }
.track b { width: 5px; height: 8px; border: 1px solid #999; border-width: 0 1px; }
.actions { position: relative; display: flex; align-items: center; gap: 14px; padding: 14px 23px 13px; background: #ededed; }
.ghost { position: absolute; left: 331px; top: -9px; font: 24px/28px "Liberation Serif", serif; color: #ddd; clip-path: inset(9px 0 0 0); }
.wide { width: 99px; margin-right: auto; }
.push, .save { width: 70px; }
.save { border-color: #4a5a9c; background: linear-gradient(#cbe3fa, #8fc5f5 50%, #6db5f3 51%, #b6eeff); }

.dock { flex: none; position: relative; width: 703px; height: 83px; margin: 0 auto; }
.shelf { position: absolute; left: 0; bottom: 0; width: 100%; height: 48px; }
.items { position: relative; display: flex; justify-content: center; height: 83px; padding-left: 4px; }
.items li { position: relative; flex: 0 0 62px; display: flex; justify-content: center; align-items: center; padding-bottom: 5px; filter: drop-shadow(0 2px 2px rgba(0,0,0,.4)); }
.items .gap { flex-basis: 31px; align-items: flex-end; padding-bottom: 8px; filter: none; }
.items .running::after { content: ""; position: absolute; bottom: 0; left: 25px; width: 12px; height: 3px; background: #dff6ff; box-shadow: 0 0 4px #8fd8ff; }
```
FILE: select.js
```js
const field = document.getElementById("name");
field.focus();
field.setSelectionRange(0, 9);
```
